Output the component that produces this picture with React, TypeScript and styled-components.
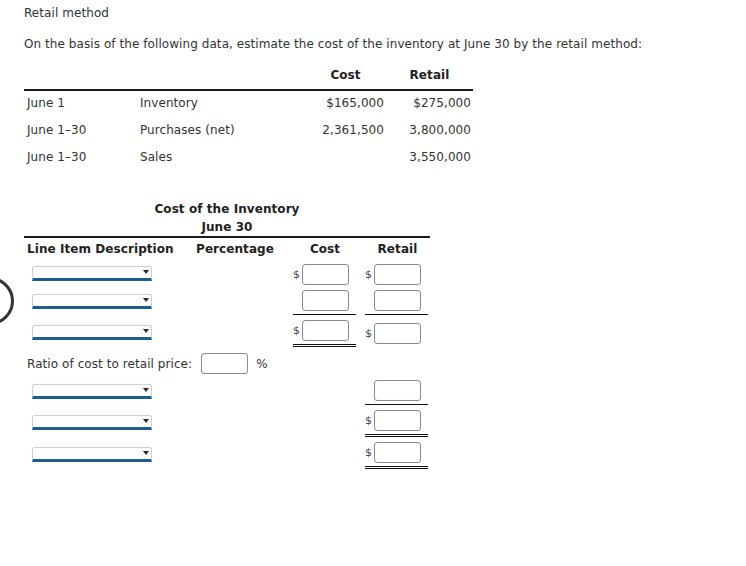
import React from "react";
import styled, { createGlobalStyle } from "styled-components";

const Global = createGlobalStyle`
  html, body { margin: 0; padding: 0; background: #fff; }
  body {
    font-family: "DejaVu Sans", Verdana, "Liberation Sans", sans-serif;
    font-size: 12px;
    letter-spacing: 0.07px;
    color: #333;
  }
`;

const Page = styled.div`
  position: relative;
  padding: 5px 24px 40px 24px;
  width: 746px;
  height: 566px;
  box-sizing: border-box;
  overflow: hidden;
`;

const Title = styled.div`
  line-height: 16px;
`;

const Question = styled.div`
  margin-top: 15px;
  line-height: 16px;
  white-space: nowrap;
`;

const DataTable = styled.div`
  width: 449px;
  margin-top: 15px;
`;

const DataRow = styled.div<{ $head?: boolean }>`
  display: grid;
  grid-template-columns: 113px 168px 81px 87px;
  line-height: 16px;
  padding: ${(p) => (p.$head ? "0 0 6px 0" : "4px 0 7px 0")};
  border-bottom: ${(p) => (p.$head ? "2px solid #1a1a1a" : "none")};
  font-weight: ${(p) => (p.$head ? "bold" : "normal")};
  color: ${(p) => (p.$head ? "#222" : "#333")};
`;

const DataCell = styled.div<{ $align?: "left" | "right" | "center" }>`
  text-align: ${(p) => p.$align || "left"};
  padding: 0 ${(p) => (p.$align === "right" ? "2px" : "0")} 0
    ${(p) => (p.$align === "left" || !p.$align ? "3px" : "0")};
  white-space: nowrap;
`;

const Caption = styled.div`
  width: 406px;
  margin-top: 28px;
  text-align: center;
  font-weight: bold;
  line-height: 18px;
  color: #222;
`;

const Sheet = styled.div`
  width: 406px;
  border-top: 2px solid #1a1a1a;
`;

const SheetRow = styled.div<{ $head?: boolean }>`
  display: grid;
  grid-template-columns: 161px 100px 80px 65px;
  align-items: center;
  padding: ${(p) => (p.$head ? "3px 0 5px 0" : "2px 0 3px 0")};
  line-height: 16px;
  font-weight: ${(p) => (p.$head ? "bold" : "normal")};
  color: ${(p) => (p.$head ? "#222" : "#333")};
`;

const HeadCell = styled.div<{ $align?: "left" | "center" }>`
  text-align: ${(p) => p.$align || "center"};
  padding-left: ${(p) => (p.$align === "left" ? "3px" : "0")};
  white-space: nowrap;
`;

const Cell = styled.div`
  display: flex;
  align-items: center;
`;

const SelectBox = styled.div`
  position: relative;
  margin-left: 8px;
  margin-top: -2px;
  width: 120px;
  height: 15px;
  box-sizing: border-box;
  border: 1px solid #d0d0d0;
  border-bottom: 3px solid #1f5e8c;
  border-radius: 3px 3px 0 0;
  background: #fff;
  box-shadow: 0 0 1px rgba(0, 0, 0, 0.08);
`;

const Caret = styled.span`
  position: absolute;
  right: 2px;
  top: 3px;
  width: 0;
  height: 0;
  border-left: 3.5px solid transparent;
  border-right: 3.5px solid transparent;
  border-top: 4px solid #2a2a2a;
`;

const MoneyBox = styled.div<{ $offset: number; $rule?: "single" | "double" }>`
  display: flex;
  align-items: center;
  margin-left: ${(p) => p.$offset}px;
  width: 63px;
  padding-bottom: ${(p) => (p.$rule ? "3px" : "0")};
  border-bottom: ${(p) =>
    p.$rule === "double"
      ? "3px double #111"
      : p.$rule === "single"
      ? "1px solid #111"
      : "none"};
`;

const Dollar = styled.span`
  width: 9px;
  font-size: 11px;
  line-height: 12px;
  color: #444;
`;

const Field = styled.div<{ $w?: number }>`
  width: ${(p) => p.$w || 47}px;
  height: 21px;
  box-sizing: border-box;
  border: 1px solid #8c8c8c;
  border-radius: 3px;
  background: #fff;
  box-shadow: inset 0 0 1px rgba(0, 0, 0, 0.15);
`;

const RatioRow = styled.div`
  display: flex;
  align-items: center;
  padding: 3px 0 4px 3px;
  line-height: 16px;
`;

const RatioField = styled(Field)`
  margin-left: 9px;
`;

const Percent = styled.span`
  margin-left: 8px;
`;

const Circle = styled.div`
  position: absolute;
  left: -34px;
  top: 277px;
  width: 48px;
  height: 48px;
  box-sizing: border-box;
  border: 3px solid #333;
  border-radius: 50%;
`;

type Rule = "single" | "double" | undefined;

const Select = () => (
  <Cell>
    <SelectBox>
      <Caret />
    </SelectBox>
  </Cell>
);

const Money = ({ offset, dollar, rule }: { offset: number; dollar?: boolean; rule?: Rule }) => (
  <Cell>
    <MoneyBox $offset={offset} $rule={rule}>
      <Dollar>{dollar ? "$" : ""}</Dollar>
      <Field />
    </MoneyBox>
  </Cell>
);

const topRows = [
  { date: "June 1", item: "Inventory", cost: "$165,000", retail: "$275,000" },
  { date: "June 1\u201330", item: "Purchases (net)", cost: "2,361,500", retail: "3,800,000" },
  { date: "June 1\u201330", item: "Sales", cost: "", retail: "3,550,000" },
];

type SheetLine = {
  cost?: { dollar?: boolean; rule?: Rule };
  retail?: { dollar?: boolean; rule?: Rule };
};

const upperLines: SheetLine[] = [
  { cost: { dollar: true }, retail: { dollar: true } },
  { cost: { rule: "single" }, retail: { rule: "single" } },
  { cost: { dollar: true, rule: "double" }, retail: { dollar: true } },
];

const lowerLines: SheetLine[] = [
  { retail: { rule: "single" } },
  { retail: { dollar: true, rule: "double" } },
  { retail: { dollar: true, rule: "double" } },
];

const Line = ({ line }: { line: SheetLine }) => (
  <SheetRow>
    <Select />
    <Cell />
    {line.cost ? <Money offset={8} dollar={line.cost.dollar} rule={line.cost.rule} /> : <Cell />}
    {line.retail ? (
      <Money offset={0} dollar={line.retail.dollar} rule={line.retail.rule} />
    ) : (
      <Cell />
    )}
  </SheetRow>
);

export default function App() {
  return (
    <>
      <Global />
      <Page>
        <Title>Retail method</Title>
        <Question>
          On the basis of the following data, estimate the cost of the inventory at June 30 by the retail method:
        </Question>
        <DataTable>
          <DataRow $head>
            <DataCell />
            <DataCell />
            <DataCell $align="center">Cost</DataCell>
            <DataCell $align="center">Retail</DataCell>
          </DataRow>
          {topRows.map((r, i) => (
            <DataRow key={i}>
              <DataCell>{r.date}</DataCell>
              <DataCell>{r.item}</DataCell>
              <DataCell $align="right">{r.cost}</DataCell>
              <DataCell $align="right">{r.retail}</DataCell>
            </DataRow>
          ))}
        </DataTable>
        <Caption>
          <div>Cost of the Inventory</div>
          <div>June 30</div>
        </Caption>
        <Sheet>
          <SheetRow $head>
            <HeadCell $align="left">Line Item Description</HeadCell>
            <HeadCell>Percentage</HeadCell>
            <HeadCell>Cost</HeadCell>
            <HeadCell>Retail</HeadCell>
          </SheetRow>
          {upperLines.map((l, i) => (
            <Line key={i} line={l} />
          ))}
          <RatioRow>
            Ratio of cost to retail price:
            <RatioField />
            <Percent>%</Percent>
          </RatioRow>
          {lowerLines.map((l, i) => (
            <Line key={i} line={l} />
          ))}
        </Sheet>
        <Circle />
      </Page>
    </>
  );
}
